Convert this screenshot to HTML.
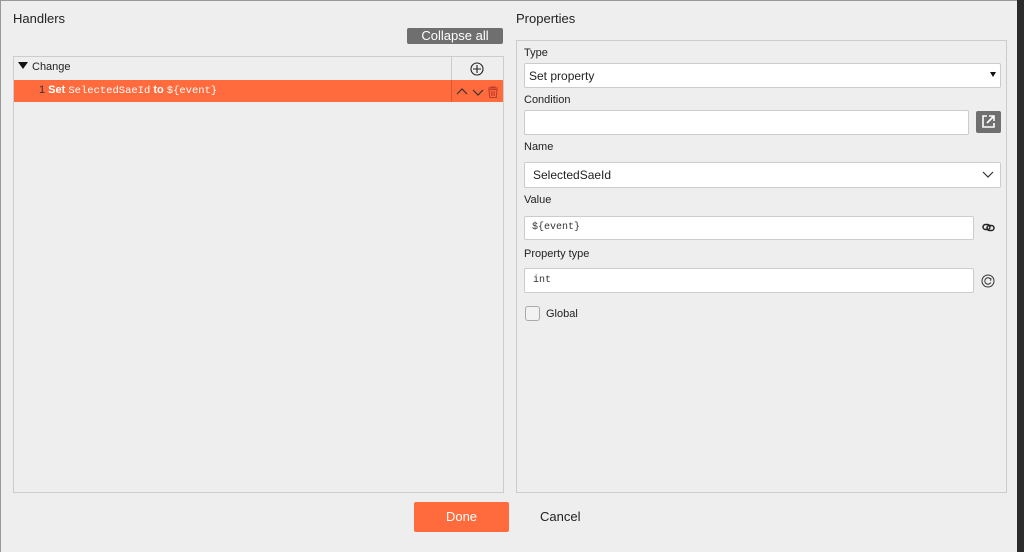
<!DOCTYPE html>
<html><head><style>
*{box-sizing:border-box;margin:0;padding:0}
body{width:1024px;height:552px;background:#2b2b2b;position:relative;overflow:hidden;font-family:"Liberation Sans",sans-serif;font-size:12px;color:#222}
.dlg{position:absolute;left:0;top:0;width:1017px;height:552px;background:#eeeeee;box-shadow:inset 1px 1px 0 #999}
.a{position:absolute}
.inp{position:absolute;background:#fff;border:1px solid #ccc;border-radius:2px}
.mono{font-family:"Liberation Mono",monospace;font-size:11px}
</style></head><body>
<div class="dlg">
<div class="a" style="left:13px;top:11px;font-size:13px">Handlers</div>
<div class="a" style="left:516px;top:11px;font-size:13px">Properties</div>
<div class="a" style="left:407px;top:28px;width:96px;height:16px;background:#6f6f6f;border-radius:2px;color:#fff;font-size:13px;text-align:center;line-height:16px">Collapse all</div>
<div class="a" style="left:13px;top:56px;width:491px;height:437px;border:1px solid #ccc"></div>
<div class="a" style="left:451px;top:57px;width:1px;height:45px;background:#ccc"></div>
<div class="a" style="left:18px;top:62px;width:0;height:0;border-left:5px solid transparent;border-right:5px solid transparent;border-top:7px solid #111"></div>
<div class="a" style="left:32px;top:61px;font-size:11px">Change</div>
<svg class="a" style="left:470px;top:62px" width="14" height="14" viewBox="0 0 14 14"><circle cx="7" cy="7" r="6" fill="none" stroke="#222" stroke-width="1.1"/><path d="M7 3v8M3 7h8" stroke="#222" stroke-width="1.1"/></svg>
<div class="a" style="left:14px;top:80px;width:489px;height:22px;background:#ff6b3d"></div>
<div class="a" style="left:451px;top:80px;width:1px;height:22px;background:#d95a30"></div>
<div class="a" style="left:39px;top:84px;color:#fff;font-size:11px;font-weight:bold"><span style="color:#333;font-weight:normal">1</span> Set <span class="mono" style="font-size:10.5px;font-weight:normal">SelectedSaeId</span> to <span class="mono" style="font-size:10.5px;font-weight:normal">${event}</span></div>
<svg class="a" style="left:456px;top:86px" width="45" height="12" viewBox="0 0 45 12"><path d="M1 8l5-5 5 5M17 4l5 5 5-5" fill="none" stroke="#333" stroke-width="1.2"/><path d="M32 2h10M35 2V1h4v1M33 3.5h8l-.7 8h-6.6z" fill="none" stroke="#c0392b" stroke-width="1.1"/><path d="M35.5 5v5M37 5v5M38.5 5v5" stroke="#c0392b" stroke-width=".8"/></svg>
<div class="a" style="left:516px;top:40px;width:491px;height:453px;border:1px solid #ccc"></div>
<div class="a" style="left:524px;top:47px;font-size:11px">Type</div>
<div class="inp" style="left:524px;top:63px;width:477px;height:25px"></div>
<div class="a" style="left:529px;top:69px;font-size:12px">Set property</div>
<div class="a" style="left:990px;top:72px;border-left:3px solid transparent;border-right:3px solid transparent;border-top:5px solid #111"></div>
<div class="a" style="left:524px;top:94px;font-size:11px">Condition</div>
<div class="inp" style="left:524px;top:110px;width:445px;height:25px"></div>
<div class="a" style="left:976px;top:111px;width:25px;height:22px;background:#6f6f6f;border-radius:2px"></div>
<svg class="a" style="left:981px;top:114px" width="15" height="15" viewBox="0 0 15 15"><path d="M6 2H2v11h11V9" fill="none" stroke="#fff" stroke-width="1.6"/><path d="M8 2h5v5M13 2L6 9" fill="none" stroke="#fff" stroke-width="1.6"/></svg>
<div class="a" style="left:524px;top:141px;font-size:11px">Name</div>
<div class="inp" style="left:524px;top:162px;width:477px;height:26px"></div>
<div class="a" style="left:533px;top:168px;font-size:12px">SelectedSaeId</div>
<svg class="a" style="left:982px;top:170px" width="12" height="9" viewBox="0 0 12 9"><path d="M1 2l5 5 5-5" fill="none" stroke="#333" stroke-width="1.2"/></svg>
<div class="a" style="left:524px;top:194px;font-size:11px">Value</div>
<div class="inp" style="left:524px;top:216px;width:450px;height:24px"></div>
<div class="a mono" style="left:532px;top:222px;font-size:10px;color:#333">${event}</div>
<svg class="a" style="left:982px;top:223px" width="13" height="9" viewBox="0 0 13 9"><rect x="1" y="1.5" width="7" height="5" rx="2.5" fill="none" stroke="#222" stroke-width="1.5"/><rect x="5" y="2.5" width="7" height="5" rx="2.5" fill="none" stroke="#222" stroke-width="1.5"/></svg>
<div class="a" style="left:524px;top:248px;font-size:11px">Property type</div>
<div class="inp" style="left:524px;top:268px;width:450px;height:25px"></div>
<div class="a mono" style="left:533px;top:275px;font-size:10px;color:#333">int</div>
<svg class="a" style="left:981px;top:274px" width="14" height="14" viewBox="0 0 14 14"><circle cx="7" cy="7" r="6" fill="none" stroke="#333" stroke-width="1"/><path d="M9.5 5A3.2 3.2 0 1 0 9.8 8.5" fill="none" stroke="#333" stroke-width="1"/><path d="M8 4.2l2 .6-.4 2" fill="none" stroke="#333" stroke-width="1"/></svg>
<div class="a" style="left:525px;top:306px;width:15px;height:15px;border:1px solid #aaa;border-radius:3px;background:#f2f2f2"></div>
<div class="a" style="left:546px;top:308px;font-size:11px">Global</div>
<div class="a" style="left:414px;top:502px;width:95px;height:30px;background:#ff6b3d;border-radius:2px;color:#fff;font-size:13px;text-align:center;line-height:30px">Done</div>
<div class="a" style="left:540px;top:509px;font-size:13px">Cancel</div>
</div>
</body></html>
